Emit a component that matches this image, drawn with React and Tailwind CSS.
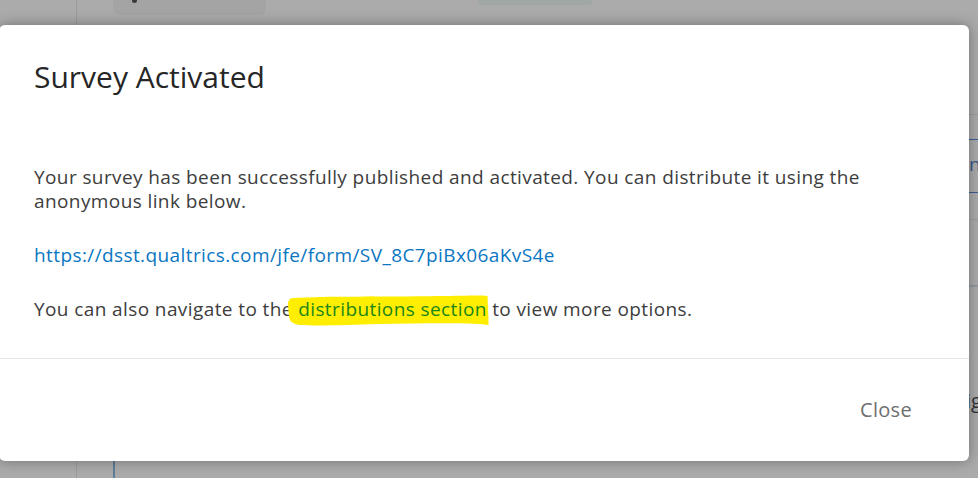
import React from 'react';

const FONT = { fontFamily: '"Open Sans", "Noto Sans", Arial, sans-serif' };

// Faded page that sits behind the dialog overlay
function Backdrop() {
  return (
    <div className="absolute inset-0 flex bg-[#ababab]">
      <div className="w-[77px] shrink-0 border-r border-[#9b9b9b]" />
      <div className="flex flex-1 flex-col pl-[36px]">
        <div className="flex items-start gap-[211px]">
          <div className="flex h-[15px] w-[153px] justify-start rounded-b-md bg-[#a4a4a4] pl-[19px]">
            <div className="h-[3px] w-[5px] rounded-b-full bg-[#3a3a3a]" />
          </div>
          <div className="h-[5px] w-[116px] rounded-b-md bg-[#a0a7a4]" />
        </div>
        <div className="flex-1" />
        <div className="h-[18px] w-[2px] bg-[#5f7c98]" />
      </div>
      <div className="flex w-[9px] shrink-0 flex-col overflow-hidden pt-[114px]" style={FONT}>
        <div className="h-[25px] border-t border-[#9c9c9c]" />
        <div className="h-[53px] border-t border-[#3f5f8f] pt-[12px] text-[19px] leading-[24px] text-[#3a5a8a]">n</div>
        <div className="h-[27px] border-t border-[#3f5f8f]" />
        <div className="h-[66px] border-t border-[#9c9c9c]" />
        <div className="h-[104px] border-t-2 border-[#8f9aa6]" />
        <div className="-ml-[3px] text-[20px] leading-[24px] text-[#333]">ig</div>
      </div>
    </div>
  );
}

function Highlight({ children }) {
  return (
    <span className="relative inline-block">
      <svg
        className="absolute left-[-11px] top-[-2px] h-[31px] w-[calc(100%+14px)]"
        viewBox="0 0 200 31"
        preserveAspectRatio="none"
      >
        <path
          d="M5 3 C40 1 90 2 150 1 C175 1 190 0 198 1 L199 30 C170 27 130 29 90 29 C60 30 30 31 12 30 C6 29 3 27 2 22 L1 10 C1 6 2 4 5 3 Z"
          fill="#ffee00"
        />
      </svg>
      <span className="relative text-[#1a861a]">{children}</span>
    </span>
  );
}

export default function App() {
  return (
    <div className="relative h-[478px] w-[978px] overflow-hidden" style={FONT}>
      <Backdrop />

      {/* Dialog */}
      <div className="absolute left-[-1px] top-[25px] flex h-[436px] w-[970px] flex-col rounded-md bg-white shadow-[0_0_14px_rgba(0,0,0,0.35)]">
        <div className="px-[35px] pt-[32px]">
          <h1 className="text-[30px] leading-[40px] text-[#262626]">Survey Activated</h1>
        </div>

        <div className="flex-1 px-[35px] pt-[68px] text-[19px] leading-[24px] tracking-[0.4px] text-[#3d3d3d]">
          <p className="pr-[60px]">
            Your survey has been successfully published and activated. You can distribute it using the
            anonymous link below.
          </p>
          <p className="mt-[30px]">
            <a className="text-[#0b76c2]">https://dsst.qualtrics.com/jfe/form/SV_8C7piBx06aKvS4e</a>
          </p>
          <p className="mt-[30px]">
            You can also navigate to the <Highlight>distributions section</Highlight> to view more options.
          </p>
        </div>

        <div className="flex h-[103px] items-center justify-end border-t border-[#e3e3e3] pr-[57px]">
          <button className="text-[20px] tracking-[0.3px] text-[#6e6e6e]">Close</button>
        </div>
      </div>
    </div>
  );
}
